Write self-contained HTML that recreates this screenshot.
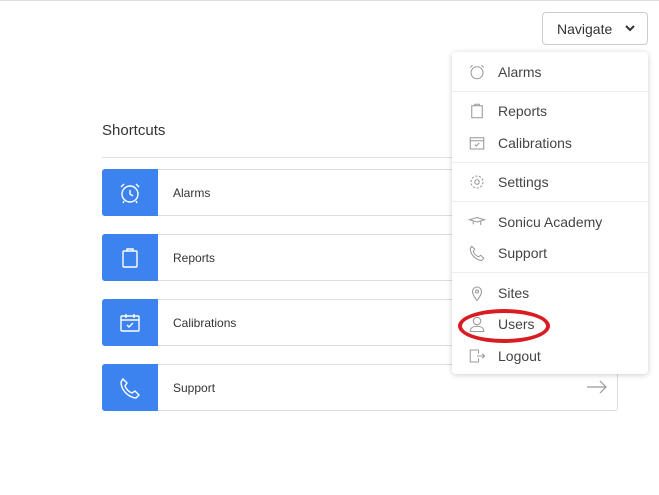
<!DOCTYPE html>
<html><head><style>
body{margin:0;width:659px;height:495px;background:#fff;font-family:"Liberation Sans",sans-serif;position:relative;overflow:hidden;color:#333}
.top{position:absolute;left:0;top:0;width:659px;height:1px;background:#ddd}
.h{position:absolute;left:102px;top:122px;font-size:15px;color:#333}
.hr{position:absolute;left:102px;top:157px;width:515px;height:1px;background:#e2e2e2}
.card{position:absolute;left:102px;width:514px;height:45px;border:1px solid #ddd;border-radius:3px;background:#fff}
.card .b{position:absolute;left:-1px;top:-1px;width:56px;height:47px;background:#3d83ef;border-radius:3px 0 0 3px}
.card .b svg{position:absolute;left:16px;top:12px}
.card .t{position:absolute;left:70px;top:16px;font-size:12px;color:#333}
.nav{position:absolute;left:542px;top:12px;width:104px;height:31px;border:1px solid #ccc;border-radius:4px;font-size:14px;color:#333}
.nav span{position:absolute;left:14px;top:8px}
.menu{position:absolute;left:452px;top:52px;width:196px;height:322px;background:#fff;border-radius:4px;box-shadow:0 1px 6px rgba(0,0,0,.2)}
.it{position:absolute;left:46px;font-size:14px;color:#444}
.ic{position:absolute;left:16px}
.d{position:absolute;left:0;width:196px;height:1px;background:#eee}
</style></head><body>
<div class="top"></div>
<div class="h">Shortcuts</div>
<div class="hr"></div>
<div class="card" style="top:169px"><div class="b"><svg width="24" height="24" viewBox="0 0 24 24" fill="none" stroke="#fff" stroke-width="1.4"><circle cx="12" cy="13" r="8"/><path d="M12 9v4l3 2M3 6l3-3M21 6l-3-3M6 20l-1 2M18 20l1 2"/></svg></div><div class="t">Alarms</div></div>
<div class="card" style="top:234px"><div class="b"><svg width="24" height="24" viewBox="0 0 24 24" fill="none" stroke="#fff" stroke-width="1.4"><rect x="5" y="5" width="14" height="16" rx="1"/><path d="M9 5V3h6v2"/></svg></div><div class="t">Reports</div></div>
<div class="card" style="top:299px"><div class="b"><svg width="24" height="24" viewBox="0 0 24 24" fill="none" stroke="#fff" stroke-width="1.4"><rect x="3" y="5" width="18" height="15" rx="1"/><path d="M3 9h18M8 3v4M16 3v4M9 14l2 2 4-4"/></svg></div><div class="t">Calibrations</div></div>
<div class="card" style="top:364px"><div class="b"><svg width="24" height="24" viewBox="0 0 24 24" fill="none" stroke="#fff" stroke-width="1.4"><path d="M5 3l4 4-2 3c1 3 4 6 7 7l3-2 4 4-3 3C10 21 3 14 3 6z"/></svg></div><div class="t">Support</div>
<svg style="position:absolute;left:483px;top:15px" width="22" height="14" viewBox="0 0 22 14" fill="none" stroke="#999" stroke-width="1.2"><path d="M1 7h19M14 1l6 6-6 6"/></svg></div>
<div class="nav"><span>Navigate</span><svg style="position:absolute;left:82px;top:12px" width="10" height="7" viewBox="0 0 10 7" fill="none" stroke="#333" stroke-width="2"><path d="M1 1l4 4 4-4"/></svg></div>
<div class="menu">
<svg class="ic" style="top:11px" width="18" height="18" viewBox="0 0 24 24" fill="none" stroke="#999" stroke-width="1.4"><circle cx="12" cy="13" r="8"/><path d="M3 6l3-3M21 6l-3-3"/></svg><div class="it" style="top:12px">Alarms</div>
<div class="d" style="top:39px"></div>
<svg class="ic" style="top:50px" width="18" height="18" viewBox="0 0 24 24" fill="none" stroke="#999" stroke-width="1.4"><rect x="5" y="5" width="14" height="16"/><path d="M9 5V3h6v2"/></svg><div class="it" style="top:51px">Reports</div>
<svg class="ic" style="top:82px" width="18" height="18" viewBox="0 0 24 24" fill="none" stroke="#999" stroke-width="1.4"><rect x="3" y="5" width="18" height="15"/><path d="M3 9h18M9 14l2 2 4-4"/></svg><div class="it" style="top:83px">Calibrations</div>
<div class="d" style="top:110px"></div>
<svg class="ic" style="top:121px" width="18" height="18" viewBox="0 0 24 24" fill="none" stroke="#999" stroke-width="1.4"><circle cx="12" cy="12" r="3"/><circle cx="12" cy="12" r="8" stroke-dasharray="3 2"/></svg><div class="it" style="top:122px">Settings</div>
<div class="d" style="top:149px"></div>
<svg class="ic" style="top:161px" width="18" height="18" viewBox="0 0 24 24" fill="none" stroke="#999" stroke-width="1.4"><path d="M2 9l10-3 10 3-10 3zM7 11v4M17 11v5"/></svg><div class="it" style="top:162px">Sonicu Academy</div>
<svg class="ic" style="top:192px" width="18" height="18" viewBox="0 0 24 24" fill="none" stroke="#999" stroke-width="1.4"><path d="M5 3l4 4-2 3c1 3 4 6 7 7l3-2 4 4-3 3C10 21 3 14 3 6z"/></svg><div class="it" style="top:193px">Support</div>
<div class="d" style="top:220px"></div>
<svg class="ic" style="top:232px" width="18" height="18" viewBox="0 0 24 24" fill="none" stroke="#999" stroke-width="1.4"><path d="M12 22s-6-7-6-12a6 6 0 0112 0c0 5-6 12-6 12z"/><circle cx="12" cy="10" r="2"/></svg><div class="it" style="top:233px">Sites</div>
<svg class="ic" style="top:263px" width="18" height="18" viewBox="0 0 24 24" fill="none" stroke="#999" stroke-width="1.4"><circle cx="12" cy="8" r="5"/><path d="M3 22c0-5 4-7 9-7s9 2 9 7z"/></svg><div class="it" style="top:264px">Users</div>
<svg class="ic" style="top:295px" width="18" height="18" viewBox="0 0 24 24" fill="none" stroke="#999" stroke-width="1.4"><path d="M14 4H3v16h11M14 9v-5M14 15v5M12 12h10M19 9l3 3-3 3"/></svg><div class="it" style="top:296px">Logout</div>
</div>
<div style="position:absolute;left:458px;top:309px;width:84px;height:26px;border:4px solid #d91c22;border-radius:50%"></div>
</body></html>
